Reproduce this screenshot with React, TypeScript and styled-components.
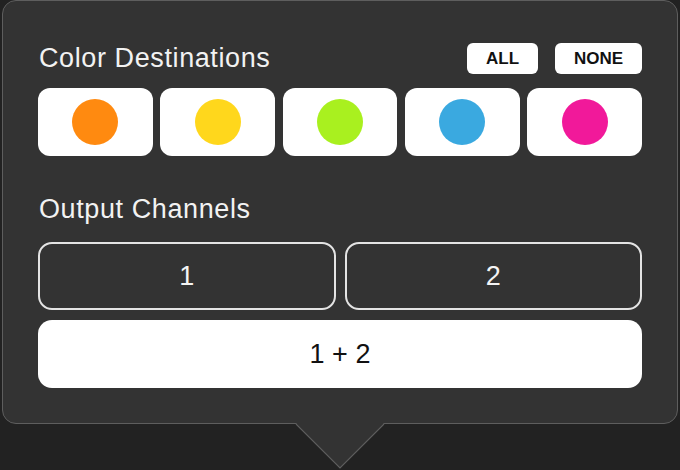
import React from "react";
import styled, { createGlobalStyle } from "styled-components";

const Global = createGlobalStyle`
  html, body { margin: 0; padding: 0; background: #222222; }
  body { width: 680px; height: 470px; overflow: hidden; font-family: "Liberation Sans", Arial, sans-serif; }
`;

const Stage = styled.div`
  width: 680px;
  height: 470px;
  padding: 0 2px;
  box-sizing: border-box;
  background: #222222;
`;

const Popover = styled.div`
  position: relative;
  box-sizing: border-box;
  width: 676px;
  height: 424px;
  background: #333333;
  border: 1px solid #5e5e5e;
  border-radius: 14px;
  padding: 41px 35px 0 35px;
  display: flex;
  flex-direction: column;
`;

const Arrow = styled.svg`
  position: absolute;
  left: 292px;
  top: 421px;
  width: 90px;
  height: 48px;
  overflow: visible;
`;

const HeaderRow = styled.div`
  display: flex;
  align-items: center;
  justify-content: space-between;
  height: 33px;
`;

const Title = styled.div`
  color: #f2f2f2;
  font-size: 27px;
  letter-spacing: 0.6px;
  line-height: 1;
  margin-left: 1px;
`;

const HeaderButtons = styled.div`
  display: flex;
  gap: 17px;
`;

const SmallButton = styled.div<{ $w: number }>`
  width: ${(p) => p.$w}px;
  height: 31px;
  background: #ffffff;
  border-radius: 6px;
  display: flex;
  align-items: center;
  justify-content: center;
  font-weight: bold;
  font-size: 17px;
  color: #111;
`;

const Swatches = styled.div`
  display: grid;
  grid-template-columns: repeat(5, 1fr);
  gap: 7.5px;
  margin-top: 13px;
`;

const Tile = styled.div`
  height: 68px;
  background: #ffffff;
  border-radius: 12px;
  display: flex;
  align-items: center;
  justify-content: center;
`;

const Dot = styled.div<{ $c: string }>`
  width: 46px;
  height: 46px;
  border-radius: 50%;
  background: ${(p) => p.$c};
`;

const Section = styled.div`
  color: #f2f2f2;
  font-size: 27px;
  letter-spacing: 0.6px;
  line-height: 1;
  margin-top: 40px;
  margin-left: 1px;
`;

const ChannelRow = styled.div`
  display: grid;
  grid-template-columns: 1fr 1fr;
  gap: 9px;
  margin-top: 19px;
`;

const Channel = styled.div<{ $on?: boolean }>`
  box-sizing: border-box;
  height: 68px;
  border-radius: 14px;
  border: ${(p) => (p.$on ? "none" : "2px solid #e4e4e4")};
  background: ${(p) => (p.$on ? "#ffffff" : "transparent")};
  color: ${(p) => (p.$on ? "#111111" : "#f4f4f4")};
  display: flex;
  align-items: center;
  justify-content: center;
  font-size: 27px;
`;

const Full = styled(Channel)`
  margin-top: 10px;
`;

const colors = ["#ff8a10", "#ffd71c", "#a9f01f", "#3aa9e0", "#f1199a"];

export default function App() {
  return (
    <Stage>
      <Global />
      <Popover>
        <HeaderRow>
          <Title>Color Destinations</Title>
          <HeaderButtons>
            <SmallButton $w={71}>ALL</SmallButton>
            <SmallButton $w={87}>NONE</SmallButton>
          </HeaderButtons>
        </HeaderRow>
        <Swatches>
          {colors.map((c) => (
            <Tile key={c}>
              <Dot $c={c} />
            </Tile>
          ))}
        </Swatches>
        <Section>Output Channels</Section>
        <ChannelRow>
          <Channel>1</Channel>
          <Channel>2</Channel>
        </ChannelRow>
        <Full $on>1 + 2</Full>
        <Arrow viewBox="0 0 90 48">
          <polygon points="0,0 90,0 45,46" fill="#333333" />
          <polyline points="1,2 45,46 89,2" fill="none" stroke="#5e5e5e" strokeWidth="1.2" />
        </Arrow>
      </Popover>
    </Stage>
  );
}
